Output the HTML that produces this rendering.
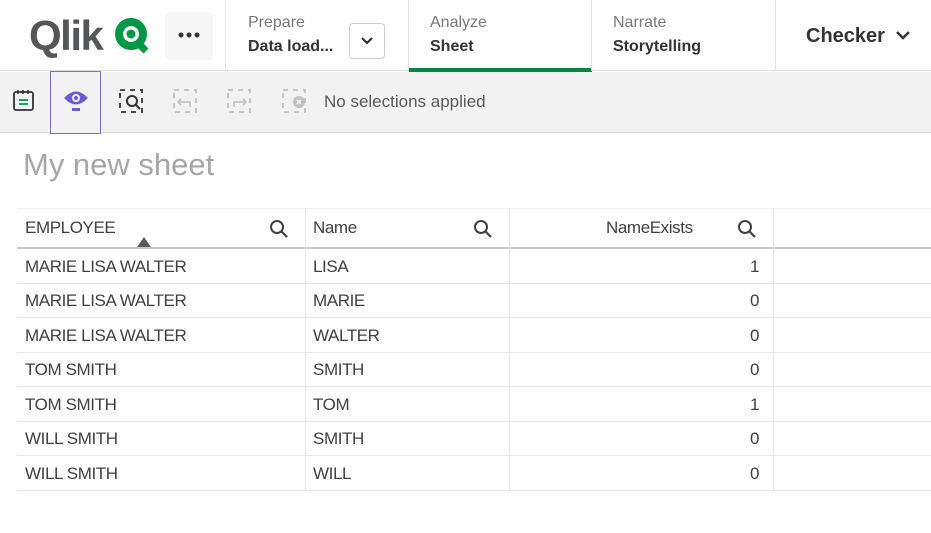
<!DOCTYPE html>
<html><head><meta charset="utf-8"><style>
*{margin:0;padding:0;box-sizing:border-box}
body{width:931px;height:533px;background:#fff;font-family:"Liberation Sans",sans-serif;position:relative;overflow:hidden;color:#404040}
.a{position:absolute}
.vl{position:absolute;width:1px;background:#e0e0e0}
.hl{position:absolute;height:1px;background:#e6e6e6;left:17px;width:914px}
.c{position:absolute;font-size:17px;letter-spacing:-0.4px;color:#404040}
</style></head><body>
<div class="a" style="left:0;top:0;width:931px;height:71px;border-bottom:1px solid #ddd"></div>
<div class="a" style="left:29px;top:12px;font-size:42px;font-weight:bold;color:#54565a;letter-spacing:-1.5px">Qlik</div>
<svg class="a" style="left:113px;top:18px" width="42" height="36" viewBox="0 0 42 36"><circle cx="18" cy="16" r="12" fill="none" stroke="#009845" stroke-width="8"/><circle cx="18" cy="16" r="4.5" fill="#009845"/><path d="M24 24 L33 33" stroke="#009845" stroke-width="7"/></svg>
<div class="a" style="left:165px;top:12px;width:48px;height:48px;background:#f6f6f6;border-radius:4px"></div>
<svg class="a" style="left:177px;top:31px" width="24" height="8"><circle cx="4" cy="4" r="2.5" fill="#333"/><circle cx="12" cy="4" r="2.5" fill="#333"/><circle cx="20" cy="4" r="2.5" fill="#333"/></svg>
<div class="vl" style="left:225px;top:0;height:71px"></div>
<div class="a" style="left:248px;top:14px;font-size:16px;color:#777">Prepare</div>
<div class="a" style="left:248px;top:38px;font-size:16px;font-weight:bold;color:#333">Data load...</div>
<div class="a" style="left:349px;top:23px;width:36px;height:36px;border:1px solid #ccc;border-radius:4px"></div>
<svg class="a" style="left:359px;top:35px" width="16" height="12"><path d="M3 3 L8 8 L13 3" fill="none" stroke="#333" stroke-width="2.2"/></svg>
<div class="vl" style="left:408px;top:0;height:71px"></div>
<div class="a" style="left:430px;top:14px;font-size:16px;color:#777">Analyze</div>
<div class="a" style="left:430px;top:38px;font-size:16px;font-weight:bold;color:#333">Sheet</div>
<div class="a" style="left:409px;top:68px;width:183px;height:4px;background:#00873d"></div>
<div class="vl" style="left:591px;top:0;height:71px"></div>
<div class="a" style="left:613px;top:14px;font-size:16px;color:#777">Narrate</div>
<div class="a" style="left:613px;top:38px;font-size:16px;font-weight:bold;color:#333">Storytelling</div>
<div class="vl" style="left:775px;top:0;height:71px"></div>
<div class="a" style="left:806px;top:25px;font-size:20px;font-weight:bold;color:#333">Checker</div>
<svg class="a" style="left:895px;top:30px" width="16" height="12"><path d="M2 2 L8 8 L14 2" fill="none" stroke="#333" stroke-width="2.5"/></svg>
<div class="a" style="left:0;top:72px;width:931px;height:61px;background:#f2f2f2;border-bottom:1px solid #ddd"></div>
<svg class="a" style="left:12px;top:89px" width="24" height="24"><rect x="2" y="3" width="19" height="18" rx="2" fill="none" stroke="#333" stroke-width="1.8"/><path d="M6 1v4M11 1v4M16 1v4" stroke="#333" stroke-width="1.5"/><path d="M7 11h9M7 15h9" stroke="#009845" stroke-width="1.8"/></svg>
<div class="a" style="left:50px;top:71px;width:51px;height:63px;border:1px solid #7b6fd6;background:#f2f2f2"></div>
<svg class="a" style="left:63px;top:89px" width="26" height="24"><path d="M1 9 Q13 -4 25 9 Q13 22 1 9Z" fill="#6b5bd2"/><circle cx="13" cy="9" r="4" fill="#f2f2f2"/><circle cx="13" cy="9" r="2" fill="#6b5bd2"/><rect x="9" y="19" width="8" height="3" fill="#6b5bd2"/></svg>
<svg class="a" style="left:119px;top:89px" width="26" height="26"><rect x="1" y="1" width="22" height="22" fill="none" stroke="#333" stroke-width="1.8" stroke-dasharray="5 5"/><circle cx="13" cy="12" r="5" fill="none" stroke="#333" stroke-width="2"/><path d="M16 15l5 5" stroke="#333" stroke-width="2"/></svg>
<svg class="a" style="left:173px;top:89px" width="26" height="26" opacity=".35"><rect x="1" y="1" width="22" height="22" fill="none" stroke="#666" stroke-width="1.8" stroke-dasharray="5 5"/><path d="M8 10 L5 13 L8 16 M5 13 H17 V18" fill="none" stroke="#666" stroke-width="1.6"/></svg>
<svg class="a" style="left:227px;top:89px" width="26" height="26" opacity=".35"><rect x="1" y="1" width="22" height="22" fill="none" stroke="#666" stroke-width="1.8" stroke-dasharray="5 5"/><path d="M16 10 L19 13 L16 16 M19 13 H7 V18" fill="none" stroke="#666" stroke-width="1.6"/></svg>
<svg class="a" style="left:282px;top:89px" width="26" height="26" opacity=".35"><rect x="1" y="1" width="22" height="22" fill="none" stroke="#666" stroke-width="1.8" stroke-dasharray="5 5"/><circle cx="17" cy="13" r="6" fill="#666"/><path d="M15 11l4 4M19 11l-4 4" stroke="#fff" stroke-width="1.5"/></svg>
<div class="a" style="left:324px;top:92px;font-size:17px;color:#595959">No selections applied</div>
<div class="a" style="left:23px;top:147px;font-size:31px;color:#a6a6a6">My new sheet</div>
<div class="hl" style="top:208px;background:#eee"></div>
<div class="hl" style="top:247px;height:2px;background:#c8c8c8"></div>
<div class="hl" style="top:283px"></div><div class="hl" style="top:317px"></div><div class="hl" style="top:352px"></div><div class="hl" style="top:386px"></div><div class="hl" style="top:421px"></div><div class="hl" style="top:455px"></div><div class="hl" style="top:490px"></div>
<div class="vl" style="left:305px;top:208px;height:282px;background:#e6e6e6"></div>
<div class="vl" style="left:509px;top:208px;height:282px;background:#e6e6e6"></div>
<div class="vl" style="left:773px;top:208px;height:282px;background:#e6e6e6"></div>
<div class="c" style="left:25px;top:218px">EMPLOYEE</div>
<div class="a" style="left:137px;top:237px;width:0;height:0;border-left:7px solid transparent;border-right:7px solid transparent;border-bottom:10px solid #595959"></div>
<div class="c" style="left:313px;top:218px">Name</div>
<div class="c" style="left:606px;top:218px">NameExists</div>
<svg class="a" style="left:269px;top:219px" width="20" height="20"><circle cx="8" cy="8" r="6" fill="none" stroke="#404040" stroke-width="2"/><path d="M12 12l6 6" stroke="#404040" stroke-width="2.2"/></svg>
<svg class="a" style="left:473px;top:219px" width="20" height="20"><circle cx="8" cy="8" r="6" fill="none" stroke="#404040" stroke-width="2"/><path d="M12 12l6 6" stroke="#404040" stroke-width="2.2"/></svg>
<svg class="a" style="left:737px;top:219px" width="20" height="20"><circle cx="8" cy="8" r="6" fill="none" stroke="#404040" stroke-width="2"/><path d="M12 12l6 6" stroke="#404040" stroke-width="2.2"/></svg>
<div class="c" style="left:25px;top:257px">MARIE LISA WALTER</div><div class="c" style="left:313px;top:257px">LISA</div><div class="c" style="left:750px;top:257px">1</div>
<div class="c" style="left:25px;top:291px">MARIE LISA WALTER</div><div class="c" style="left:313px;top:291px">MARIE</div><div class="c" style="left:750px;top:291px">0</div>
<div class="c" style="left:25px;top:326px">MARIE LISA WALTER</div><div class="c" style="left:313px;top:326px">WALTER</div><div class="c" style="left:750px;top:326px">0</div>
<div class="c" style="left:25px;top:360px">TOM SMITH</div><div class="c" style="left:313px;top:360px">SMITH</div><div class="c" style="left:750px;top:360px">0</div>
<div class="c" style="left:25px;top:395px">TOM SMITH</div><div class="c" style="left:313px;top:395px">TOM</div><div class="c" style="left:750px;top:395px">1</div>
<div class="c" style="left:25px;top:429px">WILL SMITH</div><div class="c" style="left:313px;top:429px">SMITH</div><div class="c" style="left:750px;top:429px">0</div>
<div class="c" style="left:25px;top:464px">WILL SMITH</div><div class="c" style="left:313px;top:464px">WILL</div><div class="c" style="left:750px;top:464px">0</div>
</body></html>
